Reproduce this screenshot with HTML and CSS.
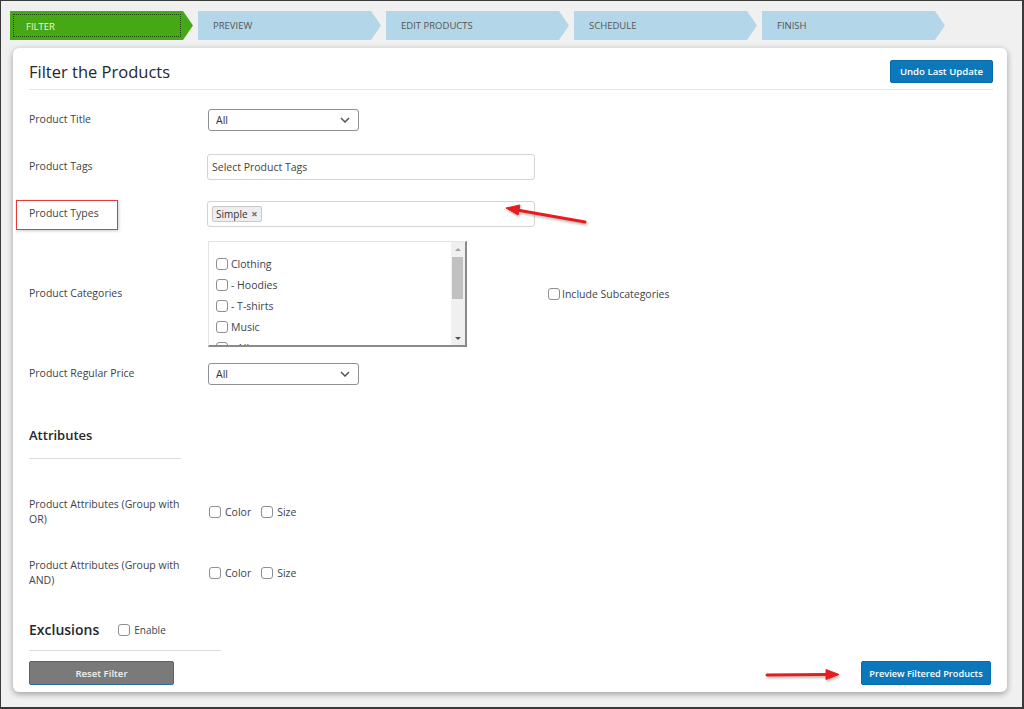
FILE: index.html
```html
<!DOCTYPE html>
<html lang="en">
<head>
    <meta charset="UTF-8">
    <title>Filter the Products</title>
    <link rel="stylesheet" href="styles.css">
</head>
<body>
<div class="screen">
    <nav class="steps">
        <div class="step active"><span class="focus">Filter</span></div>
        <div class="step">Preview</div>
        <div class="step">Edit Products</div>
        <div class="step">Schedule</div>
        <div class="step">Finish</div>
    </nav>

    <div class="card">
        <div class="card-head">
            <h2>Filter the Products</h2>
            <button type="button" class="btn btn-blue btn-undo">Undo Last Update</button>
        </div>

        <form class="filter-form">
            <div class="row">
                <label class="lbl">Product Title</label>
                <div class="select"><span>All</span>
                    <svg width="10" height="6" viewBox="0 0 10 6"><path d="M1 1l4 4 4-4" fill="none" stroke="#50575e" stroke-width="1.5"/></svg>
                </div>
            </div>

            <div class="row">
                <label class="lbl">Product Tags</label>
                <div class="text-box placeholder">Select Product Tags</div>
            </div>

            <div class="row">
                <label class="lbl">Product Types</label>
                <div class="text-box"><span class="chip">Simple <b>&times;</b></span></div>
            </div>

            <div class="row row-cats">
                <label class="lbl">Product Categories</label>
                <div class="listbox">
                    <ul class="cat-list">
                        <li><input type="checkbox"> Clothing</li>
                        <li><input type="checkbox"> - Hoodies</li>
                        <li><input type="checkbox"> - T-shirts</li>
                        <li><input type="checkbox"> Music</li>
                        <li><input type="checkbox"> - Albums</li>
                    </ul>
                    <div class="scrollbar">
                        <span class="sb-up"></span>
                        <span class="sb-thumb"></span>
                        <span class="sb-down"></span>
                    </div>
                </div>
                <label class="check sub-check"><input type="checkbox"> Include Subcategories</label>
            </div>

            <div class="row">
                <label class="lbl">Product Regular Price</label>
                <div class="select"><span>All</span>
                    <svg width="10" height="6" viewBox="0 0 10 6"><path d="M1 1l4 4 4-4" fill="none" stroke="#50575e" stroke-width="1.5"/></svg>
                </div>
            </div>

            <h3 class="section-title">Attributes</h3>

            <div class="row row-attr first-attr">
                <label class="lbl">Product Attributes (Group with OR)</label>
                <label class="check"><input type="checkbox"> Color</label>
                <label class="check"><input type="checkbox"> Size</label>
            </div>

            <div class="row row-attr">
                <label class="lbl">Product Attributes (Group with AND)</label>
                <label class="check"><input type="checkbox"> Color</label>
                <label class="check"><input type="checkbox"> Size</label>
            </div>

            <div class="exclusions">
                <h3>Exclusions</h3>
                <label class="check small"><input type="checkbox"> Enable</label>
            </div>

            <div class="actions">
                <button type="button" class="btn btn-gray">Reset Filter</button>
                <button type="button" class="btn btn-blue btn-preview">Preview Filtered Products</button>
            </div>
        </form>
    </div>

    <!-- annotation overlay -->
    <div class="mark-box"></div>
    <svg class="arrows" width="1024" height="709" viewBox="0 0 1024 709">
        <g fill="#e41e1e" stroke="#e41e1e">
            <line x1="585" y1="222" x2="517" y2="210" stroke-width="3" stroke-linecap="round"/>
            <polygon points="506,208 520,205 518,215" stroke-width="1"/>
            <line x1="767" y1="675" x2="827" y2="674.5" stroke-width="3" stroke-linecap="round"/>
            <polygon points="839,674.5 826,669.5 826,679.5" stroke-width="1"/>
        </g>
    </svg>
</div>
</body>
</html>
```

FILE: styles.css
```css
body {
    margin: 0;
    font-family: "Open Sans", "Noto Sans", sans-serif;
    color: #3c434a;
}
.screen {
    position: relative;
    width: 1024px;
    height: 709px;
    box-sizing: border-box;
    border-style: solid;
    border-color: #3a3a3a;
    border-width: 1px 2px 2px 1px;
    background: #f0f0f1;
    padding: 10px 0 0 9px;
    overflow: hidden;
}

/* wizard steps */
.steps {
    display: flex;
    gap: 5px;
    height: 29px;
}
.step {
    width: 183px;
    height: 29px;
    box-sizing: border-box;
    padding-left: 15px;
    line-height: 30px;
    font-size: 9.5px;
    text-transform: uppercase;
    color: #555;
    background: #b3d7e8;
    clip-path: polygon(0 0, calc(100% - 10px) 0, 100% 50%, calc(100% - 10px) 100%, 0 100%);
}
.step.active {
    background: #46a815;
    color: #eef7d8;
    padding-left: 3px;
}
.step.active .focus {
    display: block;
    height: 23px;
    margin-top: 3px;
    width: 168px;
    box-sizing: border-box;
    padding-left: 12px;
    line-height: 23px;
    border: 1px dotted #1d4a08;
}

/* card */
.card {
    width: 994px;
    margin: 8px 0 0 3px;
    background: #fff;
    border-radius: 6px;
    box-shadow: 0 2px 6px rgba(0, 0, 0, 0.35);
    padding-bottom: 7px;
}
.card-head {
    display: flex;
    justify-content: space-between;
    align-items: center;
    margin: 0 14px 0 16px;
    padding: 12px 0 6px;
    border-bottom: 1px solid #e2e4e7;
}
.card-head h2 {
    margin: 0;
    font-size: 16.5px;
    font-weight: 400;
    color: #23282d;
}
.btn {
    font-family: inherit;
    font-size: 9.6px;
    font-weight: 600;
    border-radius: 2px;
    cursor: pointer;
    height: 24px;
    padding: 0;
}
.btn-blue {
    background: #0b78bb;
    border: 1px solid #096ca8;
    color: #fff;
}
.btn-undo {
    width: 103px;
    height: 23px;
}
.btn-preview {
    width: 130px;
    font-size: 9.2px;
}
.btn-gray {
    width: 145px;
    background: #7a7a7a;
    border: 1px solid #2f6e9b;
    color: #f0f0f0;
}

/* form */
.filter-form {
    padding: 6px 16px 0 16px;
}
.row {
    display: flex;
    align-items: center;
    min-height: 47px;
}
.lbl {
    width: 178px;
    flex: none;
    box-sizing: border-box;
    padding-right: 22px;
    font-size: 10.5px;
    line-height: 15px;
    color: #3c434a;
}
.select {
    width: 151px;
    height: 22px;
    box-sizing: border-box;
    margin-left: 1px;
    border: 1px solid #8c8f94;
    border-radius: 3px;
    display: flex;
    align-items: center;
    justify-content: space-between;
    padding: 0 8px 0 7px;
    font-size: 10.5px;
    color: #2c3338;
}
.text-box {
    width: 328px;
    height: 26px;
    box-sizing: border-box;
    border: 1px solid #d3d3d3;
    border-radius: 3px;
    display: flex;
    align-items: center;
    padding: 0 4px;
    font-size: 10.5px;
    color: #444;
}
.chip {
    display: inline-block;
    height: 14px;
    line-height: 14px;
    padding: 0 4px 0 3px;
    border: 1px solid #c9c9c9;
    border-radius: 2px;
    background: #eeeeee;
    font-size: 10px;
    color: #333;
}
.chip b {
    font-size: 11px;
    margin-left: 1px;
    color: #666;
}

/* category list */
.row-cats {
    min-height: 113px;
}
.listbox {
    position: relative;
    width: 259px;
    height: 106px;
    box-sizing: border-box;
    margin-left: 1px;
    border-style: solid;
    border-color: #e3e3e3 #8a8a8a #8a8a8a #e3e3e3;
    border-width: 1px 2px 2px 1px;
    overflow: hidden;
}
.cat-list {
    list-style: none;
    margin: 0;
    padding: 12px 0 0 7px;
}
.cat-list li {
    height: 21px;
    display: flex;
    align-items: center;
    gap: 3px;
    font-size: 10.5px;
    color: #3c434a;
}
.scrollbar {
    position: absolute;
    top: 0;
    right: 0;
    width: 14px;
    height: 100%;
    background: #f0f0f0;
}
.sb-up, .sb-down {
    position: absolute;
    left: 4px;
    width: 0;
    height: 0;
    border-left: 3px solid transparent;
    border-right: 3px solid transparent;
}
.sb-up {
    top: 6px;
    border-bottom: 3px solid #a3a3a3;
}
.sb-down {
    bottom: 5px;
    border-top: 3px solid #505050;
}
.sb-thumb {
    position: absolute;
    top: 15px;
    left: 1px;
    width: 11px;
    height: 42px;
    background: #c1c1c1;
}

input[type="checkbox"] {
    appearance: none;
    -webkit-appearance: none;
    width: 12px;
    height: 12px;
    margin: 0;
    flex: none;
    border: 1px solid #8c8f94;
    border-radius: 3px;
    background: #fff;
}
.check {
    display: flex;
    align-items: center;
    gap: 4px;
    font-size: 10.5px;
    color: #3c434a;
    margin-right: 10px;
}
.sub-check {
    margin-left: 81px;
    gap: 2px;
}

/* attributes */
.section-title {
    width: 152px;
    margin: 28px 0 0;
    padding-bottom: 13px;
    border-bottom: 1px solid #dcdcde;
    font-size: 13px;
    font-weight: 600;
    line-height: 20px;
    color: #23282d;
}
.row-attr {
    min-height: 61px;
}
.row-attr .lbl + .check {
    margin-left: 2px;
}
.first-attr {
    margin-top: 22px;
}

.exclusions {
    width: 192px;
    display: flex;
    align-items: center;
    margin-top: 17px;
    padding-bottom: 10px;
    border-bottom: 1px solid #dcdcde;
}
.exclusions h3 {
    margin: 0 19px 0 0;
    font-size: 14px;
    font-weight: 600;
    line-height: 20px;
    color: #23282d;
}
.check.small {
    font-size: 10px;
}

.actions {
    display: flex;
    justify-content: space-between;
    margin-top: 10px;
}

/* annotations */
.mark-box {
    position: absolute;
    left: 15px;
    top: 199px;
    width: 102px;
    height: 30px;
    box-sizing: border-box;
    border: 1.5px solid #e53935;
    box-shadow: 1px 1px 3px rgba(0, 0, 0, 0.2);
}
.arrows {
    position: absolute;
    left: -1px;
    top: -1px;
    filter: drop-shadow(1px 2px 1px rgba(0, 0, 0, 0.25));
}
```
